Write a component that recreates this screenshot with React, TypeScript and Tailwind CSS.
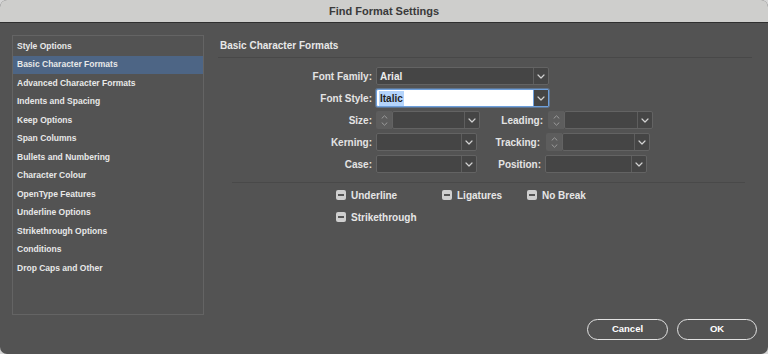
import type { ReactNode } from 'react';

const styleItems = [
  'Style Options',
  'Basic Character Formats',
  'Advanced Character Formats',
  'Indents and Spacing',
  'Keep Options',
  'Span Columns',
  'Bullets and Numbering',
  'Character Colour',
  'OpenType Features',
  'Underline Options',
  'Strikethrough Options',
  'Conditions',
  'Drop Caps and Other',
];

function Chevron() {
  return (
    <svg width="8" height="5" viewBox="0 0 8 5" fill="none">
      <path d="M1 1l3 3 3-3" stroke="#d2d2d2" strokeWidth="1.2" strokeLinecap="round" strokeLinejoin="round" />
    </svg>
  );
}

function Spinner() {
  return (
    <div className="flex h-[18px] w-[16px] flex-col items-center justify-center gap-[3px] rounded-l-[2px] bg-[#5d5d5d]">
      <svg width="7" height="4" viewBox="0 0 7 4" fill="none">
        <path d="M1 3.2l2.5-2.4L6 3.2" stroke="#9c9c9c" strokeWidth="1" strokeLinecap="round" />
      </svg>
      <svg width="7" height="4" viewBox="0 0 7 4" fill="none">
        <path d="M1 0.8l2.5 2.4L6 0.8" stroke="#9c9c9c" strokeWidth="1" strokeLinecap="round" />
      </svg>
    </div>
  );
}

function Combo({ width, value, spin }: { width: string; value?: string; spin?: boolean }) {
  return (
    <div className="flex h-[18px]">
      {spin && <Spinner />}
      <div className={`flex h-[18px] ${width} rounded-[2px] border border-[#636363] bg-[#454545]`}>
        <div className="flex flex-1 items-center pl-[3px] text-[10px] font-bold text-[#ececec]">{value}</div>
        <div className="flex w-[15px] items-center justify-center border-l border-[#5e5e5e]">
          <Chevron />
        </div>
      </div>
    </div>
  );
}

function Label({ width, children }: { width: string; children: ReactNode }) {
  return <div className={`${width} shrink-0 text-right text-[10px] font-bold text-[#e4e4e4]`}>{children}</div>;
}

function Check({ label, width }: { label: string; width?: string }) {
  return (
    <div className={`flex items-center ${width ?? ''}`}>
      <div className="flex h-[10px] w-[10px] items-center justify-center rounded-[2px] bg-[#cfcfcf]">
        <div className="h-[2px] w-[6px] bg-[#555555]" />
      </div>
      <span className="ml-[5px] text-[10px] font-bold text-[#e6e6e6]">{label}</span>
    </div>
  );
}

export default function App() {
  return (
    <div className="h-[354px] w-[768px] bg-[#d6d6d6] font-['Liberation_Sans',Arial,sans-serif]">
      <div className="flex h-full flex-col overflow-hidden rounded-[7px] bg-[#535353]">
        {/* Title bar */}
        <div className="flex h-[23px] shrink-0 items-center justify-center border-b border-[#2f2f2f] bg-[#cececc] text-[11px] font-bold text-[#3a3a3a]">
          Find Format Settings
        </div>

        <div className="flex flex-1 pl-[12px] pt-[12px]">
          {/* Category list */}
          <div className="h-[280px] w-[192px] shrink-0 border border-[#646464] pt-[1px]">
            {styleItems.map((item, i) => (
              <div
                key={item}
                className={`flex h-[18.5px] items-center pl-[4px] text-[8.5px] font-bold text-[#e8e8e8] ${i === 1 ? 'bg-[#4d6585]' : ''}`}
              >
                {item}
              </div>
            ))}
          </div>

          {/* Settings panel */}
          <div className="ml-[14px] flex flex-1 flex-col pr-[11px]">
            <div className="flex h-[23px] w-[534px] items-center border-b border-[#484848] pb-px pl-[2px] text-[10px] font-bold text-[#e8e8e8]">
              Basic Character Formats
            </div>

            <div className="mt-[9px] flex flex-col gap-[4px]">
              <div className="flex h-[18px] items-center">
                <Label width="w-[154px]">Font Family:</Label>
                <div className="ml-[4px]">
                  <Combo width="w-[173px]" value="Arial" />
                </div>
              </div>

              <div className="flex h-[18px] items-center">
                <Label width="w-[154px]">Font Style:</Label>
                <div className="ml-[4px] flex h-[18px] w-[173px] rounded-[2px] border border-[#6d9fdc] bg-white shadow-[0_0_0_1px_rgba(110,160,220,0.45)]">
                  <div className="flex flex-1 items-center pl-[2px]">
                    <span className="bg-[#b4d4fb] px-[1px] text-[10px] font-bold text-[#1e1e1e]">Italic</span>
                  </div>
                  <div className="flex w-[15px] items-center justify-center border-l border-[#6d9fdc] bg-[#454545]">
                    <Chevron />
                  </div>
                </div>
              </div>

              <div className="flex h-[18px] items-center">
                <Label width="w-[154px]">Size:</Label>
                <div className="ml-[4px]">
                  <Combo width="w-[88px]" spin />
                </div>
                <Label width="w-[63px]">Leading:</Label>
                <div className="ml-[5px]">
                  <Combo width="w-[89px]" spin />
                </div>
              </div>

              <div className="flex h-[18px] items-center">
                <Label width="w-[154px]">Kerning:</Label>
                <div className="ml-[4px]">
                  <Combo width="w-[101px]" />
                </div>
                <Label width="w-[63px]">Tracking:</Label>
                <div className="ml-[6px]">
                  <Combo width="w-[88px]" spin />
                </div>
              </div>

              <div className="flex h-[18px] items-center">
                <Label width="w-[154px]">Case:</Label>
                <div className="ml-[4px]">
                  <Combo width="w-[101px]" />
                </div>
                <Label width="w-[64px]">Position:</Label>
                <div className="ml-[4px]">
                  <Combo width="w-[102px]" />
                </div>
              </div>
            </div>

            <div className="ml-[14px] mt-[9px] w-[513px] border-t border-[#494949]" />

            <div className="ml-[118px] mt-[5px] flex flex-col gap-[8px]">
              <div className="flex h-[14px] items-center">
                <Check label="Underline" width="w-[106px]" />
                <Check label="Ligatures" width="w-[85px]" />
                <Check label="No Break" />
              </div>
              <div className="flex h-[14px] items-center">
                <Check label="Strikethrough" />
              </div>
            </div>

            <div className="mb-[14px] mt-auto flex justify-end gap-[9px]">
              <button className="h-[21px] w-[81px] rounded-full border-[1.5px] border-[#e2e2e2] text-[9.5px] font-bold text-white">
                Cancel
              </button>
              <button className="h-[21px] w-[80px] rounded-full border-[1.5px] border-[#e2e2e2] text-[9.5px] font-bold text-white">
                OK
              </button>
            </div>
          </div>
        </div>
      </div>
    </div>
  );
}
